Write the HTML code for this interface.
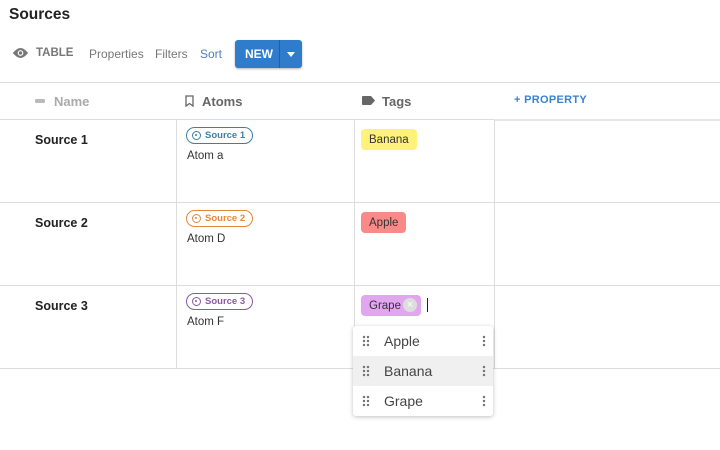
<!DOCTYPE html>
<html><head><style>
*{box-sizing:border-box;margin:0;padding:0}
body{width:720px;height:450px;background:#fff;font-family:"Liberation Sans",sans-serif;position:relative;overflow:hidden;color:#333}
.a{position:absolute}
.title{left:9px;top:6px;font-size:15.5px;font-weight:bold;color:#222}
.tb{top:47px;font-size:12px;color:#777}
.hl{left:0;width:720px;height:1px;background:#ddd}
.vl{width:1px;background:#ddd}
.hd{top:94px;font-size:13px;font-weight:bold;color:#666}
.rn{left:35px;font-size:12.5px;font-weight:bold;color:#222}
.chip{left:186px;height:17px;border:1.3px solid;border-radius:9px;font-size:9.5px;font-weight:bold;padding:0 7px 0 5px;display:flex;align-items:center;gap:4px}
.chip i{width:9px;height:9px;border:1.2px solid;border-radius:50%;display:inline-block;position:relative}
.chip i:after{content:"";position:absolute;left:2.3px;top:2.3px;width:2px;height:2px;background:currentColor;border-radius:50%}
.atom{left:187px;font-size:11.5px;color:#333}
.tag{left:361px;height:21px;border-radius:4px;font-size:11.5px;padding:0 8px;display:flex;align-items:center;color:#333}
.dd{left:353px;top:326px;width:140px;height:90px;background:#fff;border-radius:3px;box-shadow:0 1px 4px rgba(0,0,0,.25)}
.it{position:absolute;left:0;width:140px;height:30px;font-size:14px;color:#444;line-height:30px;padding-left:31px}
.grip{position:absolute;left:9px;top:9px;width:8px;height:12px;background:radial-gradient(circle,#777 1.1px,transparent 1.4px) 0 0/4px 4px}
.kb{position:absolute;right:7px;top:9px;width:4px;height:12px;background:radial-gradient(circle,#777 1.1px,transparent 1.4px) 0 0/4px 4px}
</style></head><body>
<div class="a title">Sources</div>
<svg class="a" style="left:12px;top:47px" width="17" height="12" viewBox="0 0 24 16"><path d="M12 1C6 1 2 8 1 8c1 0 5 7 11 7s10-7 11-7c-1 0-5-7-11-7z" fill="#777"/><circle cx="12" cy="8" r="4" fill="#fff"/><circle cx="12" cy="8" r="2.4" fill="#777"/></svg>
<div class="a tb" style="left:36px;font-weight:bold;font-size:11.5px">TABLE</div>
<div class="a tb" style="left:89px">Properties</div>
<div class="a tb" style="left:155px">Filters</div>
<div class="a tb" style="left:200px;color:#4a7fbf">Sort</div>
<div class="a" style="left:235px;top:40px;width:67px;height:28px;background:#2f7ccd;border-radius:3px;box-shadow:0 1px 2px rgba(0,0,0,.3)"></div>
<div class="a" style="left:279px;top:40px;width:1px;height:28px;background:#1e5fa5"></div>
<div class="a" style="left:245px;top:47px;color:#fff;font-size:12px;font-weight:bold">NEW</div>
<div class="a" style="left:287px;top:52px;border:4px solid transparent;border-top:5px solid #fff;border-bottom:0"></div>
<div class="a hl" style="top:82px"></div>
<div class="a" style="left:35px;top:99px;width:10px;height:4px;background:#bbb;border-radius:1px"></div>
<div class="a hd" style="left:54px;color:#aaa">Name</div>
<svg class="a" style="left:185px;top:95px" width="9" height="12" viewBox="0 0 9 12"><path d="M1 1h7v10L4.5 8.5 1 11z" fill="none" stroke="#666" stroke-width="1.3"/></svg>
<div class="a hd" style="left:202px">Atoms</div>
<svg class="a" style="left:362px;top:96px" width="13" height="9" viewBox="0 0 13 9"><path d="M0 1a1 1 0 011-1h8l4 4.5L9 9H1a1 1 0 01-1-1z" fill="#666"/></svg>
<div class="a hd" style="left:382px">Tags</div>
<div class="a" style="left:514px;top:94px;font-size:11px;font-weight:bold;color:#3b82cf;letter-spacing:.3px">+ PROPERTY</div>
<div class="a hl" style="top:119px;width:494px"></div>
<div class="a" style="left:494px;top:119px;width:226px;height:2px;background:#e6e6e6"></div>
<div class="a hl" style="top:202px"></div>
<div class="a hl" style="top:285px"></div>
<div class="a hl" style="top:368px"></div>
<div class="a vl" style="left:176px;top:120px;height:248px"></div>
<div class="a vl" style="left:354px;top:120px;height:248px"></div>
<div class="a vl" style="left:494px;top:120px;height:248px"></div>
<div class="a rn" style="top:133px">Source 1</div>
<div class="a rn" style="top:216px">Source 2</div>
<div class="a rn" style="top:299px">Source 3</div>
<div class="a chip" style="top:127px;color:#3d7fa8;border-color:#3d7fa8"><i></i>Source 1</div>
<div class="a chip" style="top:210px;color:#e08a3c;border-color:#e08a3c"><i></i>Source 2</div>
<div class="a chip" style="top:293px;color:#8a5aa8;border-color:#8a5aa8"><i></i>Source 3</div>
<div class="a atom" style="top:150px">Atom a</div>
<div class="a atom" style="top:233px">Atom D</div>
<div class="a atom" style="top:316px">Atom F</div>
<div class="a tag" style="top:129px;background:#fff27a">Banana</div>
<div class="a tag" style="top:212px;background:#f98a88">Apple</div>
<div class="a tag" style="top:295px;background:#e2a6f0;padding-right:20px">Grape</div>
<div class="a" style="left:403px;top:298px;width:14px;height:14px;border-radius:50%;background:#ddd;color:#fff;font-size:11px;line-height:14px;text-align:center">×</div>
<div class="a" style="left:427px;top:298px;width:1px;height:14px;background:#222"></div>
<div class="a dd">
<div class="it" style="top:0"><span class="grip"></span>Apple<span class="kb"></span></div>
<div class="it" style="top:30px;background:#f0f0f0"><span class="grip"></span>Banana<span class="kb"></span></div>
<div class="it" style="top:60px"><span class="grip"></span>Grape<span class="kb"></span></div>
</div>
</body></html>
